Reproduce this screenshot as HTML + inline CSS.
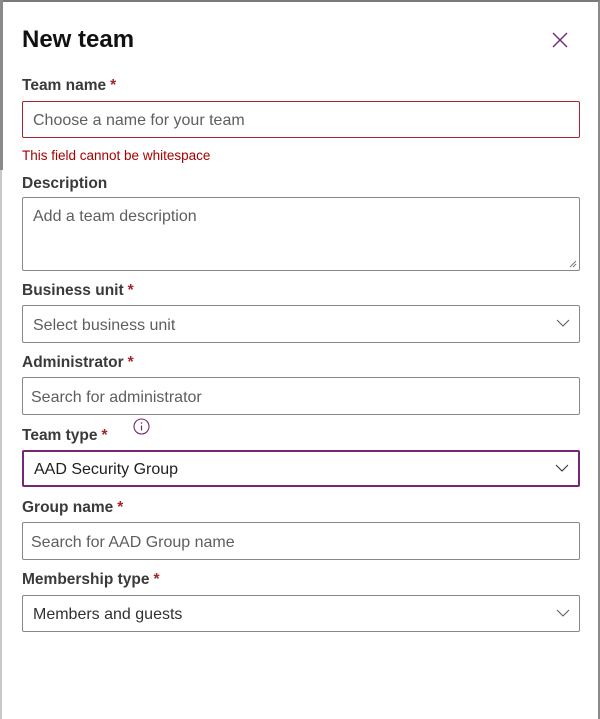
<!DOCTYPE html>
<html><head><meta charset="utf-8"><style>
*{box-sizing:border-box;margin:0;padding:0}
body{width:600px;height:719px;background:#fff;position:relative;overflow:hidden;font-family:"Liberation Sans",sans-serif;color:#201f1e}
.frame{position:absolute;inset:0;border-top:2px solid #7a7a7a;border-left:2px solid #c8c8c8;border-right:2px solid #8a8a8a}
.lbar{position:absolute;left:0;top:0;width:3px;height:170px;background:#8a8a8a}
h1{position:absolute;left:22px;top:26px;font-size:24px;font-weight:bold;color:#111}
.x{position:absolute;left:552px;top:32px}
.lbl{position:absolute;left:22px;font-size:15.5px;font-weight:bold;color:#3b3a39}
.lbl b{color:#a4262c;margin-left:4px}
.box{position:absolute;left:22px;width:558px;border:1px solid #8a8886;border-radius:2px;font-size:16px;color:#605e5c;padding-left:10px;padding-top:3px;display:flex;align-items:center}
.chev{position:absolute;right:9px;top:50%;margin-top:-5px}
.err{position:absolute;left:22px;top:148px;font-size:13.5px;color:#a80000}
</style></head><body>
<div class="frame"></div><div class="lbar"></div>
<h1>New team</h1>
<svg class="x" width="16" height="16" viewBox="0 0 16 16"><path d="M1 1L15 15M15 1L1 15" stroke="#742774" stroke-width="1.4"/></svg>

<div class="lbl" style="top:77px">Team name<b>*</b></div>
<div class="box" style="top:101px;height:37px;border:1.5px solid #a4262c">Choose a name for your team</div>
<div class="err">This field cannot be whitespace</div>

<div class="lbl" style="top:175px">Description</div>
<div class="box" style="top:197px;height:74px;align-items:flex-start;padding-top:10px">Add a team description
<svg style="position:absolute;right:2px;bottom:2px" width="8" height="8" viewBox="0 0 8 8"><path d="M7 1L1 7M7 4L4 7" stroke="#777" stroke-width="1"/></svg></div>

<div class="lbl" style="top:282px">Business unit<b>*</b></div>
<div class="box" style="top:305px;height:38px">Select business unit<svg class="chev" width="14" height="9" viewBox="0 0 14 9"><path d="M1 1L7 7L13 1" stroke="#605e5c" fill="none" stroke-width="1.1"/></svg></div>

<div class="lbl" style="top:354px">Administrator<b>*</b></div>
<div class="box" style="top:377px;height:38px;padding-left:8px">Search for administrator</div>

<div class="lbl" style="top:427px">Team type<b>*</b></div>
<svg style="position:absolute;left:133px;top:418px" width="17" height="17" viewBox="0 0 17 17"><circle cx="8.5" cy="8.5" r="7.5" fill="none" stroke="#742774" stroke-width="1.1"/><path d="M8.5 7.5V12.5" stroke="#742774" stroke-width="1.2"/><circle cx="8.5" cy="5" r="0.8" fill="#742774"/></svg>
<div class="box" style="top:450px;height:37px;border:2px solid #742774;color:#201f1e">AAD Security Group<svg class="chev" width="14" height="9" viewBox="0 0 14 9"><path d="M1 1L7 7L13 1" stroke="#323130" fill="none" stroke-width="1.1"/></svg></div>

<div class="lbl" style="top:499px">Group name<b>*</b></div>
<div class="box" style="top:522px;height:38px;padding-left:8px">Search for AAD Group name</div>

<div class="lbl" style="top:571px">Membership type<b>*</b></div>
<div class="box" style="top:595px;height:37px;color:#323130">Members and guests<svg class="chev" width="14" height="9" viewBox="0 0 14 9"><path d="M1 1L7 7L13 1" stroke="#605e5c" fill="none" stroke-width="1.1"/></svg></div>
</body></html>
